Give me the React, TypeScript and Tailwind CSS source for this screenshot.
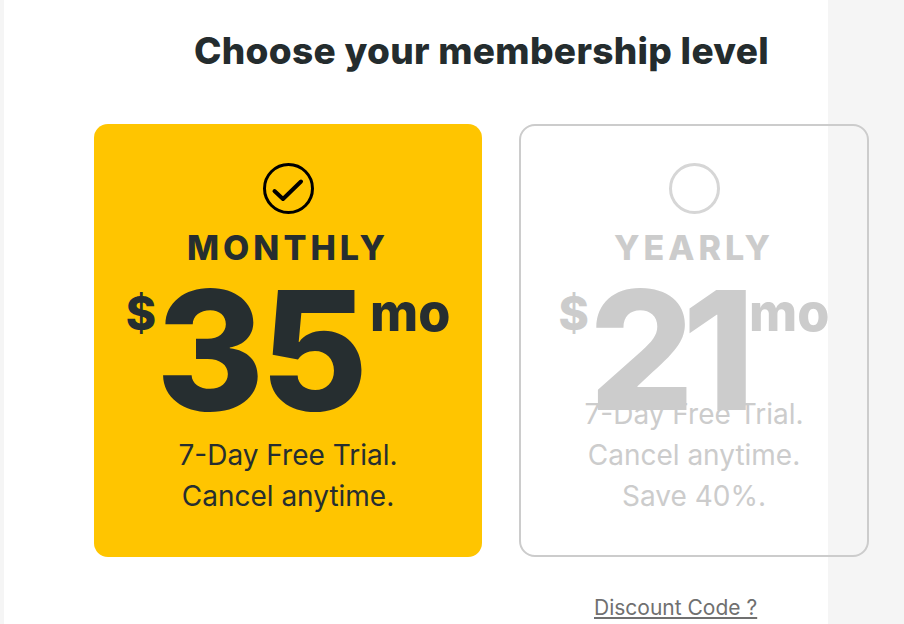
import { FC } from "react";

type PlanProps = {
  name: string;
  price: string;
  lines: string[];
  selected?: boolean;
  priceTracking: string;
};

const CheckIcon: FC<{ selected?: boolean }> = ({ selected }) => (
  <svg width="51" height="51" viewBox="0 0 51 51" fill="none">
    <circle
      cx="25.5"
      cy="25.5"
      r="24"
      stroke={selected ? "#000000" : "#d6d6d6"}
      strokeWidth="3"
    />
    {selected && (
      <path
        d="M11.5 28 L20 36 L38 18.5"
        stroke="#000000"
        strokeWidth="4"
        strokeLinecap="round"
        strokeLinejoin="round"
      />
    )}
  </svg>
);

const PlanCard: FC<PlanProps> = ({ name, price, lines, selected, priceTracking }) => {
  const color = selected ? "text-[#262e30]" : "text-[#cccccc]";
  return (
    <div
      className={
        selected
          ? "flex h-[433px] w-[388px] shrink-0 flex-col items-center rounded-[14px] bg-[#ffc500] pt-[39px] pb-[40px]"
          : "flex h-[433px] w-[350px] shrink-0 flex-col items-center rounded-[16px] border-2 border-[#cccccc] pt-[37px] pb-[38px]"
      }
    >
      <CheckIcon selected={selected} />
      <h2
        className={`mt-[14px] text-[34px] leading-[40px] font-extrabold tracking-[4px] ${color}`}
      >
        {name}
      </h2>
      <div className={`flex min-h-0 flex-1 items-start justify-center font-extrabold ${color}`}>
        <span className="mt-[22px] text-[46px] leading-[46px]">$</span>
        <span className={`text-[165px] leading-[165px] ${priceTracking}`}>{price}</span>
        <span className="mt-[19px] ml-[6px] text-[52px] leading-[52px]">mo</span>
      </div>
      <div className={`text-center text-[28px] leading-[41px] ${color}`}>
        {lines.map((ele, idx) => (
          <p key={idx}>{ele}</p>
        ))}
      </div>
    </div>
  );
};

const App: FC = () => {
  return (
    <div className="flex h-[624px] w-[904px] overflow-hidden bg-[#f5f5f5] font-['Inter',sans-serif]">
      <div className="ml-[4px] w-[824px] shrink-0 bg-white">
        <div className="ml-[90px] w-[775px] pt-[29px]">
          <h1 className="text-center text-[37px] leading-[44px] font-extrabold tracking-[0.3px] text-[#242c2e]">
            Choose your membership level
          </h1>
          <div className="mt-[51px] flex gap-[37px]">
            <PlanCard
              name="MONTHLY"
              price="35"
              lines={["7-Day Free Trial.", "Cancel anytime."]}
              selected
              priceTracking="tracking-[-4px]"
            />
            <PlanCard
              name="YEARLY"
              price="21"
              lines={["7-Day Free Trial.", "Cancel anytime.", "Save 40%."]}
              priceTracking="tracking-[-12px]"
            />
          </div>
          <div className="mt-[39px] pl-[500px]">
            <a
              href="#"
              className="text-[21px] leading-[24px] text-[#707070] underline underline-offset-2"
            >
              Discount Code ?
            </a>
          </div>
        </div>
      </div>
    </div>
  );
};

export default App;
